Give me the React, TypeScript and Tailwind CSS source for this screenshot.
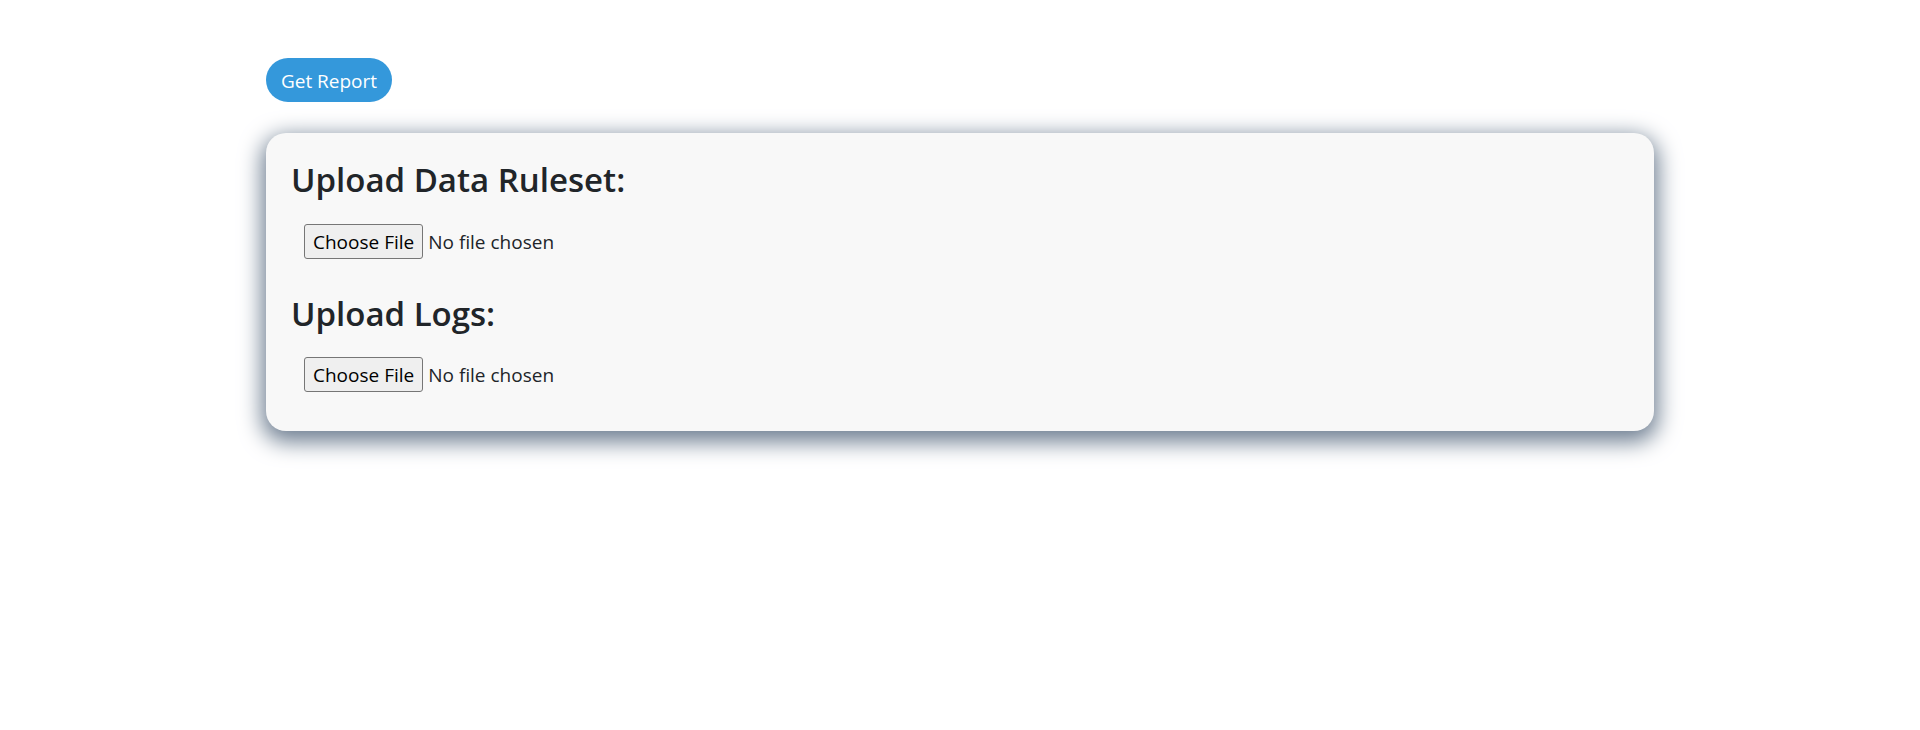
const UploadField = ({ label, top, gap }: { label: string; top: string; gap: string }) => {
  return (
    <div className={top}>
      <h2 className="text-[33px] leading-[40px] font-semibold text-[#212529]">{label}</h2>
      <div className={`${gap} ml-[13px]`}>
        <input
          type="file"
          className="text-[19px] leading-[35px] text-[#212529] file:h-[35px] file:px-[8px] file:mr-[5px] file:border file:border-[#767676] file:rounded-[3px] file:bg-[#efefef] file:text-[#000]"
        />
      </div>
    </div>
  );
};

const App = () => {
  return (
    <div className="min-h-[730px] w-full bg-white font-['Open_Sans',sans-serif]">
      <div className="w-[1388px] mx-auto pt-[58px]">
        <button className="flex items-center justify-center h-[44px] w-[126px] pt-[3px] rounded-full bg-[#3498db] text-white text-[19px]">
          Get Report
        </button>
        <div className="mt-[31px] rounded-[20px] bg-[#f8f8f8] px-[25px] pt-[27px] pb-[38px] shadow-[0_7px_22px_4px_#6f7f92]">
          <UploadField label="Upload Data Ruleset:" top="" gap="mt-[24px]" />
          <UploadField label="Upload Logs:" top="mt-[34px]" gap="mt-[23px]" />
        </div>
      </div>
    </div>
  );
};

export default App;
